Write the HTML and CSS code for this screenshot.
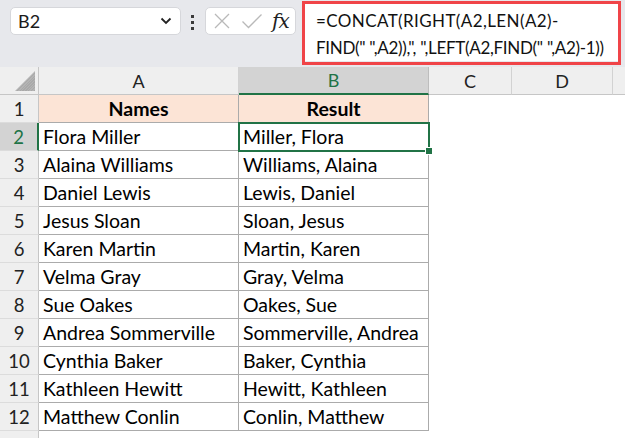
FILE: index.html
```html
<!DOCTYPE html>
<html>
<head>
<meta charset="utf-8">
<link rel="stylesheet" href="styles.css">
</head>
<body>
<div class="toolbar">
  <div class="namebox">
    <span class="nb-text">B2</span>
    <svg class="chev" width="12" height="8" viewBox="0 0 12 8"><path d="M1.5 1.5 L6 6 L10.5 1.5" fill="none" stroke="#222" stroke-width="1.8"/></svg>
  </div>
  <div class="dots"><i></i><i></i><i></i></div>
  <div class="fxbox">
    <svg width="18" height="18" viewBox="0 0 18 18" class="ic-x"><path d="M2 2 L16 16 M16 2 L2 16" stroke="#b9b9b9" stroke-width="1.3" fill="none"/></svg>
    <svg width="22" height="16" viewBox="0 0 22 16" class="ic-ok"><path d="M1.5 8.5 L7.5 14.5 L20.5 1.5" stroke="#b9b9b9" stroke-width="1.3" fill="none"/></svg>
    <span class="fx">fx</span>
  </div>
  <div class="formula">
    <div class="ftext"><span class="l1">=CONCAT(RIGHT(A2,LEN(A2)-</span><br><span class="l2">FIND(" ",A2)),", ",LEFT(A2,FIND(" ",A2)-1))</span></div>
    <div class="fstrip"></div>
  </div>
</div>
<div class="sheetwrap">
<div class="sheet">
  <div class="ch corner"><span class="tri"></span></div>
  <div class="ch">A</div>
  <div class="ch sel">B</div>
  <div class="ch">C</div>
  <div class="ch">D</div>
  <div class="ch last"></div>

  <div class="rh">1</div><div class="c hd">Names</div><div class="c hd">Result</div><div class="e"></div><div class="e"></div><div class="e"></div>
  <div class="rh sel">2</div><div class="c">Flora Miller</div><div class="c">Miller, Flora</div><div class="e"></div><div class="e"></div><div class="e"></div>
  <div class="rh">3</div><div class="c">Alaina Williams</div><div class="c">Williams, Alaina</div><div class="e"></div><div class="e"></div><div class="e"></div>
  <div class="rh">4</div><div class="c">Daniel Lewis</div><div class="c">Lewis, Daniel</div><div class="e"></div><div class="e"></div><div class="e"></div>
  <div class="rh">5</div><div class="c">Jesus Sloan</div><div class="c">Sloan, Jesus</div><div class="e"></div><div class="e"></div><div class="e"></div>
  <div class="rh">6</div><div class="c">Karen Martin</div><div class="c">Martin, Karen</div><div class="e"></div><div class="e"></div><div class="e"></div>
  <div class="rh">7</div><div class="c">Velma Gray</div><div class="c">Gray, Velma</div><div class="e"></div><div class="e"></div><div class="e"></div>
  <div class="rh">8</div><div class="c">Sue Oakes</div><div class="c">Oakes, Sue</div><div class="e"></div><div class="e"></div><div class="e"></div>
  <div class="rh">9</div><div class="c">Andrea Sommerville</div><div class="c">Sommerville, Andrea</div><div class="e"></div><div class="e"></div><div class="e"></div>
  <div class="rh">10</div><div class="c">Cynthia Baker</div><div class="c">Baker, Cynthia</div><div class="e"></div><div class="e"></div><div class="e"></div>
  <div class="rh">11</div><div class="c">Kathleen Hewitt</div><div class="c">Hewitt, Kathleen</div><div class="e"></div><div class="e"></div><div class="e"></div>
  <div class="rh">12</div><div class="c">Matthew Conlin</div><div class="c">Conlin, Matthew</div><div class="e"></div><div class="e"></div><div class="e"></div>
  <div class="rh"></div><div class="e"></div><div class="e"></div><div class="e"></div><div class="e"></div><div class="e"></div>
</div>
<div class="selbox"><span class="handle"></span></div>
</div>
</body>
</html>
```
FILE: styles.css
```css
html, body {
  margin: 0;
  padding: 0;
  background: #ffffff;
  width: 625px;
  height: 438px;
  overflow: hidden;
  font-family: Lato, "Open Sans", sans-serif;
  color: #000;
}
.toolbar {
  height: 67px;
  background: #e7e8ec;
  display: flex;
  align-items: flex-start;
  box-sizing: border-box;
}
.namebox {
  margin: 7px 0 0 10px;
  width: 171px;
  height: 28px;
  box-sizing: border-box;
  background: #fff;
  border: 1px solid #d6d7db;
  border-radius: 5px;
  display: flex;
  align-items: center;
  justify-content: space-between;
  padding: 0 8px 0 7px;
}
.nb-text {
  font-size: 18px;
  color: #1a1a1a;
}
.dots {
  margin: 15px 0 0 10px;
  display: flex;
  flex-direction: column;
  gap: 3px;
}
.dots i {
  display: block;
  width: 3px;
  height: 3px;
  background: #3a3a3a;
}
.fxbox {
  margin: 7px 0 0 11px;
  width: 91px;
  height: 28px;
  box-sizing: border-box;
  background: #fff;
  border: 1px solid #d6d7db;
  border-radius: 5px;
  display: flex;
  align-items: center;
  padding: 0 0 0 7px;
}
.ic-x { margin-right: 10px; }
.ic-ok { margin-right: 9px; }
.fx {
  font-family: "DejaVu Serif", "Liberation Serif", serif;
  font-style: italic;
  font-size: 20px;
  color: #222;
  letter-spacing: -1px;
}
.formula {
  margin: 1px 0 0 6px;
  width: 319px;
  height: 64px;
  box-sizing: border-box;
  border: 3px solid #f04448;
  background: #fff;
  display: flex;
  flex-direction: column;
}
.ftext {
  flex: 1;
  padding: 3px 0 0 11px;
  font-size: 17px;
  line-height: 27px;
  color: #111;
  white-space: nowrap;
}
.l1 { letter-spacing: 0.4px; }
.l2 { letter-spacing: -0.3px; }
.fstrip {
  height: 6px;
  background: #e7e8ec;
}
.sheetwrap {
  position: relative;
}
.sheet {
  display: grid;
  grid-template-columns: 39px 200px 190px 83px 101px 12px;
  grid-auto-rows: 28px;
}
.ch {
  background: #efefef;
  box-sizing: border-box;
  border-right: 1px solid #d2d2d2;
  border-bottom: 1px solid #c6c6c6;
  display: flex;
  align-items: center;
  justify-content: center;
  font-size: 18px;
  color: #222;
}
.ch.sel {
  background: #d3d3d3;
  color: #217346;
  border-bottom: 2px solid #217346;
  border-right-color: #bdbdbd;
}
.ch.last { border-right: none; }
.corner {
  position: relative;
  justify-content: flex-end;
  align-items: flex-end;
  padding: 0 3px 3px 0;
  border-right: 1px solid #c6c6c6;
}
.tri {
  width: 20px;
  height: 20px;
  background: repeating-linear-gradient(135deg, #b4b4b4 0 1px, #a9a9a9 1px 2px);
  clip-path: polygon(100% 0, 100% 100%, 0 100%);
}
.rh {
  background: #efefef;
  box-sizing: border-box;
  border-right: 1px solid #c6c6c6;
  border-bottom: 1px solid #dcdcdc;
  display: flex;
  align-items: center;
  justify-content: center;
  font-size: 18.5px;
  color: #222;
}
.rh.sel {
  background: #d3d3d3;
  color: #217346;
  border-right: 2px solid #217346;
}
.c {
  box-sizing: border-box;
  border-right: 1px solid #ababab;
  border-bottom: 1px solid #ababab;
  display: flex;
  align-items: center;
  padding-left: 4px;
  font-size: 19.5px;
  white-space: nowrap;
  overflow: hidden;
}
.c.hd {
  background: #fce4d6;
  font-weight: bold;
  justify-content: center;
  padding-left: 0;
}
.e { background: #fff; }
.selbox {
  position: absolute;
  left: 238px;
  top: 55px;
  width: 192px;
  height: 30px;
  box-sizing: border-box;
  border: 2px solid #217346;
}
.handle {
  position: absolute;
  right: -5px;
  bottom: -5px;
  width: 6px;
  height: 6px;
  background: #217346;
  border: 1px solid #fff;
}
```
